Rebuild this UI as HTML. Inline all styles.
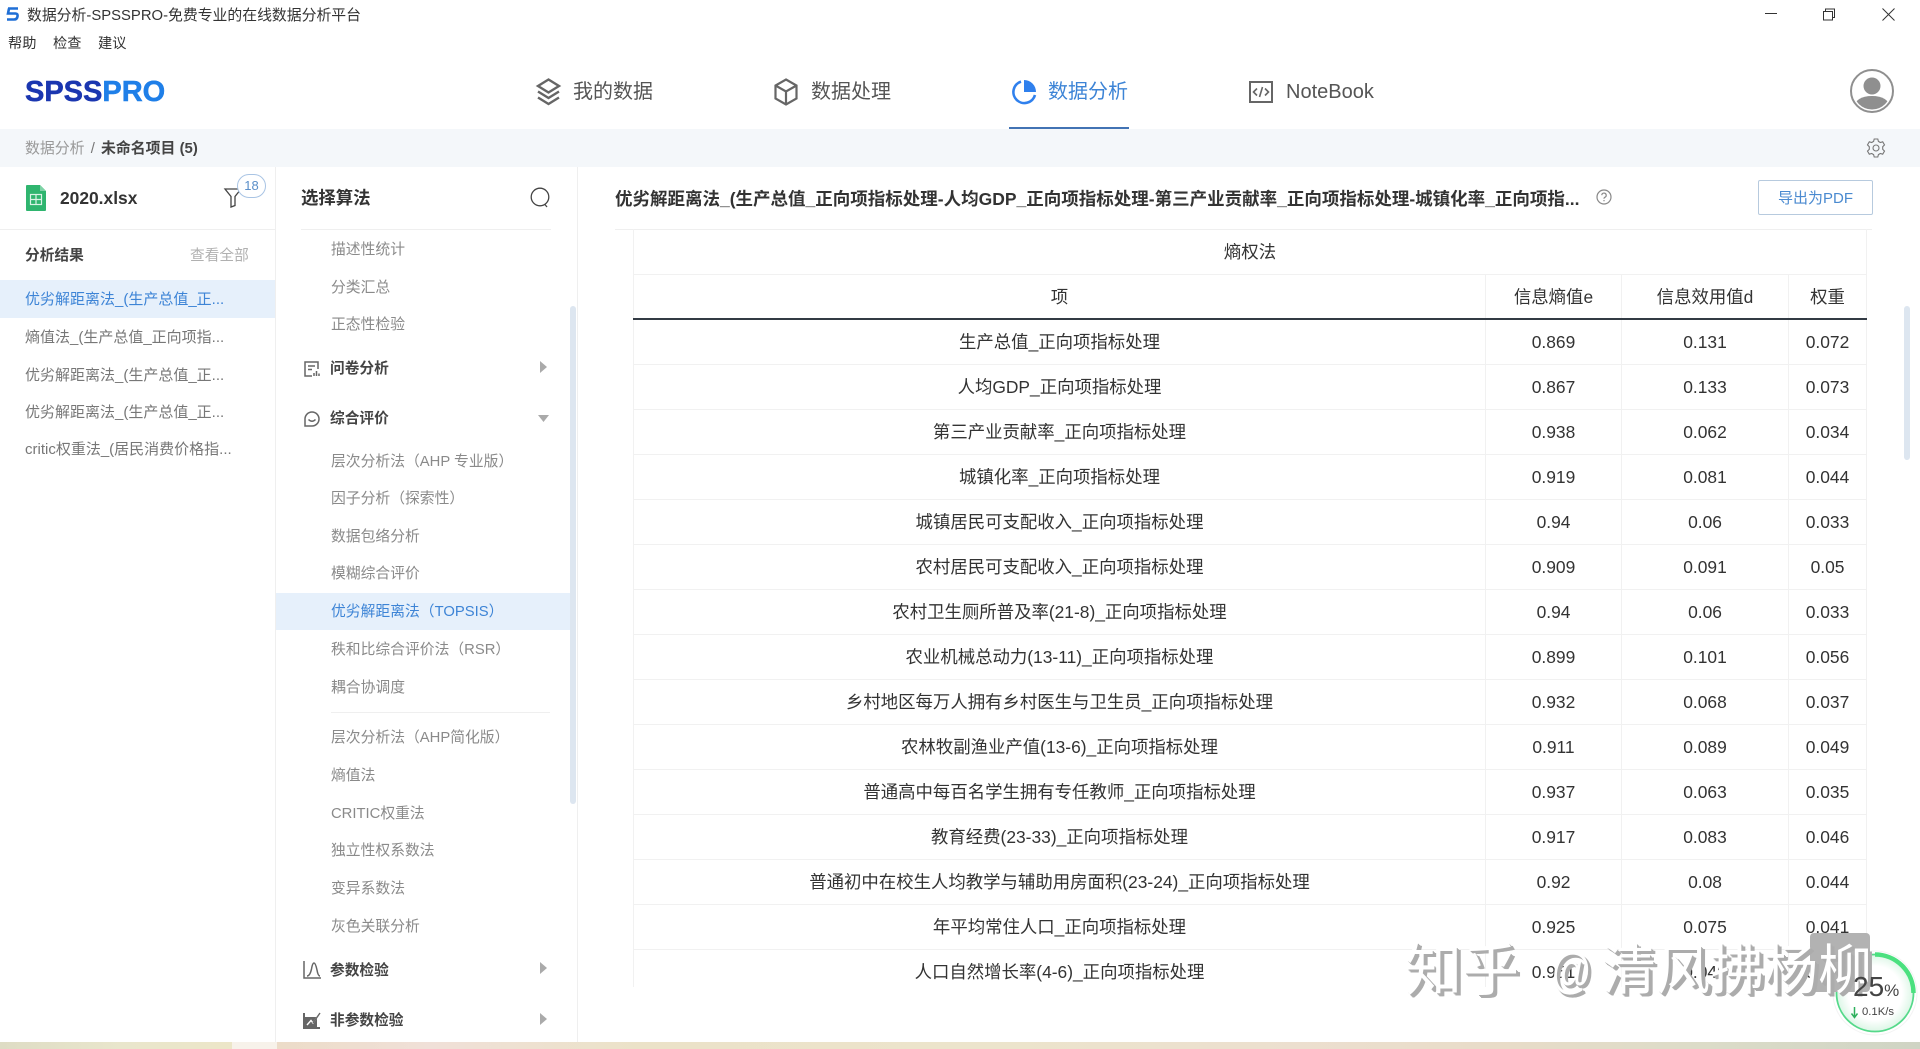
<!DOCTYPE html>
<html lang="zh">
<head>
<meta charset="utf-8">
<title>数据分析-SPSSPRO-免费专业的在线数据分析平台</title>
<style>
html,body{margin:0;padding:0;background:#fff}
body{position:relative;width:1920px;height:1049px;overflow:hidden;font-family:"Liberation Sans","Noto Sans CJK SC",sans-serif;color:#333}
.t{position:absolute;white-space:nowrap;line-height:24px;height:24px;margin-top:1px}
.b{font-weight:700}
.abs{position:absolute}
.m{font-size:14.8px;color:#8a8a8a;left:331px}
.s{font-size:14.7px;color:#444;left:330px;font-weight:700}
.r{font-size:15px;color:#777;left:25px}
.n{font-size:20px;color:#555}
.w{position:absolute;white-space:nowrap;color:#fff;height:64px;line-height:64px;text-shadow:1px 1px 0 #acacac,2px 2px 0 #acacac,3px 3px 0 #acacac,4px 3px 0 #acacac}
svg{position:absolute;overflow:visible}
#tw{position:absolute;left:633px;top:229px;width:1234px;height:758px;overflow:hidden}
table{border-collapse:collapse;table-layout:fixed;width:1233px;font-size:17.4px;color:#333;text-align:center}
td{border:1px solid #f1f1f1;padding:0;height:44px;line-height:24px;white-space:nowrap}
tr.a td{height:44px;border-top:none}
tr.h td{height:43px;border-bottom:2px solid #333b44}
</style>
</head>
<body>
<!-- title bar -->
<svg style="left:6px;top:7px" width="13" height="14" viewBox="0 0 13 14"><path d="M2 1.5H12M3 1.5L2 6.5H9.5Q12 6.5 11.5 9.5Q11 12.5 8 12.5H1" fill="none" stroke="#1f6fd6" stroke-width="2.6"/></svg>
<div class="t" style="left:27px;top:3px;font-size:14.85px;color:#333">数据分析-SPSSPRO-免费专业的在线数据分析平台</div>
<div class="t" style="left:8px;top:31px;font-size:14.2px;color:#333">帮助</div>
<div class="t" style="left:53px;top:31px;font-size:14.2px;color:#333">检查</div>
<div class="t" style="left:98px;top:31px;font-size:14.2px;color:#333">建议</div>
<div class="abs" style="left:1765px;top:13px;width:12px;height:1px;background:#333"></div>
<svg style="left:1822px;top:8px" width="14" height="13" viewBox="0 0 14 13"><path d="M1.5 3.5H10.5V12H1.5ZM3.5 3.5V1H12.5V9.5H10.5" fill="none" stroke="#333"/></svg>
<svg style="left:1882px;top:8px" width="13" height="13" viewBox="0 0 13 13"><path d="M.5.5L12.5 12.5M12.5.5L.5 12.5" fill="none" stroke="#333"/></svg>

<!-- header -->
<div class="t b" style="left:25px;top:74px;height:34px;line-height:34px;font-size:29px;color:#1a36b0;-webkit-text-stroke:.5px">SPSS<span style="color:#1f7fe8">PRO</span></div>

<svg style="left:536px;top:78px" width="25" height="28" viewBox="0 0 25 28" fill="none" stroke="#666" stroke-width="2.4"><path d="M12.5 1.5L23 8L12.5 14.5L2 8Z"/><path d="M2 13.5L12.5 20L23 13.5"/><path d="M2 19.5L12.5 26L23 19.5"/></svg>
<div class="t n" style="left:573px;top:79px">我的数据</div>
<svg style="left:774px;top:78px" width="24" height="28" viewBox="0 0 24 28" fill="none" stroke="#666" stroke-width="2.2"><path d="M12 1.5L22.5 7.5V20.5L12 26.5L1.5 20.5V7.5Z"/><path d="M1.5 7.5L12 13.5L22.5 7.5M12 13.5V26.5"/></svg>
<div class="t n" style="left:811px;top:79px">数据处理</div>
<svg style="left:1011px;top:79px" width="26" height="26" viewBox="0 0 26 26" fill="none"><path d="M10 2.6A11 11 0 1 0 24 16" stroke="#2f80ed" stroke-width="2.6"/><path d="M13 1A12 12 0 0 1 25 13H13Z" fill="#2f80ed"/></svg>
<div class="t n" style="left:1048px;top:79px;color:#3d84d6">数据分析</div>
<div class="abs" style="left:1009px;top:127px;width:120px;height:2px;background:#4273b4"></div>
<svg style="left:1249px;top:81px" width="24" height="22" viewBox="0 0 24 22" fill="none" stroke="#666"><rect x="1" y="1" width="22" height="20" stroke-width="2"/><path d="M8 7.5L4.5 11L8 14.5M16 7.5L19.5 11L16 14.5M13.5 6L10.5 16" stroke-width="1.6"/></svg>
<div class="t n" style="left:1286px;top:79px">NoteBook</div>

<svg style="left:1850px;top:69px" width="44" height="44" viewBox="0 0 44 44"><defs><clipPath id="cl"><circle cx="22" cy="22" r="18.5"/></clipPath></defs><circle cx="22" cy="22" r="21" fill="#fff" stroke="#8f8f8f" stroke-width="2"/><g clip-path="url(#cl)" fill="#8f8f8f"><circle cx="22" cy="17" r="8.5"/><path d="M3 42Q4 27 22 27Q40 27 41 42Z"/></g></svg>

<!-- breadcrumb -->
<div class="abs" style="left:0;top:129px;width:1920px;height:38px;background:#f4f7fa"></div>
<div class="t" style="left:25px;top:136px;font-size:14.9px;color:#999">数据分析 <span style="color:#777;margin:0 2px">/</span> <span style="color:#444;font-weight:700">未命名项目 (5)</span></div>
<svg style="left:1866px;top:138px" width="20" height="20" viewBox="0 0 20 20" fill="none" stroke="#777" stroke-width="1.1"><path d="M8.2 1H11.8L12.4 3.4L14.3 4.5L16.7 3.8L18.5 6.9L16.7 8.7V11.3L18.5 13.1L16.7 16.2L14.3 15.5L12.4 16.6L11.8 19H8.2L7.6 16.6L5.7 15.5L3.3 16.2L1.5 13.1L3.3 11.3V8.7L1.5 6.9L3.3 3.8L5.7 4.5L7.6 3.4Z"/><circle cx="10" cy="10" r="3"/></svg>

<!-- panel borders -->
<div class="abs" style="left:275px;top:167px;width:1px;height:875px;background:#efefef"></div>
<div class="abs" style="left:577px;top:167px;width:1px;height:875px;background:#efefef"></div>

<!-- left panel -->
<svg style="left:26px;top:185px" width="20" height="26" viewBox="0 0 20 26"><path d="M1 0H14L20 6V25Q20 26 19 26H1Q0 26 0 25V1Q0 0 1 0Z" fill="#2fb56f"/><path d="M14 0L20 6H14Z" fill="#7ed3a6"/><rect x="4.5" y="9.5" width="11" height="10" fill="none" stroke="#d9f3e5" stroke-width="1.2"/><path d="M10 9.5V19.5M4.5 14.5H15.5" stroke="#d9f3e5" stroke-width="1.2"/></svg>
<div class="t b" style="left:60px;top:185px;font-size:17.4px;color:#333">2020.xlsx</div>
<svg style="left:224px;top:188px" width="18" height="20" viewBox="0 0 18 20" fill="none" stroke="#444" stroke-width="1.3"><path d="M1 1H17L11 8.5V17.5L7 19V8.5Z"/></svg>
<div class="abs" style="left:237px;top:174px;width:27px;height:22px;border:1px solid #a9c4e4;border-radius:12px;background:#fff;color:#5b8fc9;font-size:13px;line-height:22px;text-align:center">18</div>
<div class="abs" style="left:0;top:229px;width:275px;height:1px;background:#efefef"></div>
<div class="t b" style="left:25px;top:243px;font-size:14.7px;color:#444">分析结果</div>
<div class="t" style="left:190px;top:243px;font-size:14.7px;color:#b0b0b0">查看全部</div>
<div class="abs" style="left:0;top:280px;width:275px;height:38px;background:#e6f0fb"></div>
<div class="t r" style="top:287px;color:#3d84d6">优劣解距离法_(生产总值_正...</div>
<div class="t r" style="top:325px">熵值法_(生产总值_正向项指...</div>
<div class="t r" style="top:363px">优劣解距离法_(生产总值_正...</div>
<div class="t r" style="top:400px">优劣解距离法_(生产总值_正...</div>
<div class="t r" style="top:437px">critic权重法_(居民消费价格指...</div>

<!-- middle panel -->
<div class="t b" style="left:301px;top:185px;font-size:17.4px;color:#333">选择算法</div>
<svg style="left:530px;top:187px" width="20" height="21" viewBox="0 0 20 21" fill="none" stroke="#444" stroke-width="1.3"><circle cx="10" cy="10" r="8.8"/><path d="M14.5 17L17 20"/></svg>
<div class="abs" style="left:301px;top:229px;width:250px;height:1px;background:#efefef"></div>
<div class="t m" style="top:237px">描述性统计</div>
<div class="t m" style="top:275px">分类汇总</div>
<div class="t m" style="top:312px">正态性检验</div>
<svg style="left:304px;top:361px" width="16" height="16" viewBox="0 0 16 16" fill="none" stroke="#666" stroke-width="1.5"><path d="M8 15H1V1H14V8"/><path d="M4 5H11M4 8.5H8M10 15V12M12.5 15V10M15 15V12.5"/></svg>
<div class="t s" style="top:356px">问卷分析</div>
<svg style="left:540px;top:361px" width="7" height="12" viewBox="0 0 7 12"><path d="M0 0L7 6L0 12Z" fill="#aaa"/></svg>
<svg style="left:303px;top:410px" width="18" height="18" viewBox="0 0 18 18" fill="none" stroke="#666" stroke-width="1.5"><path d="M2 16V9A7 7 0 1 1 9 16Z"/><path d="M5.5 9.5Q9 13 12.5 9.5"/></svg>
<div class="t s" style="top:406px">综合评价</div>
<svg style="left:538px;top:415px" width="11" height="7" viewBox="0 0 11 7"><path d="M0 0H11L5.5 7Z" fill="#aaa"/></svg>
<div class="t m" style="top:449px">层次分析法（AHP 专业版）</div>
<div class="t m" style="top:486px">因子分析（探索性）</div>
<div class="t m" style="top:524px">数据包络分析</div>
<div class="t m" style="top:561px">模糊综合评价</div>
<div class="abs" style="left:276px;top:593px;width:294px;height:37px;background:#e6f0fb"></div>
<div class="t m" style="top:599px;color:#3d84d6">优劣解距离法（TOPSIS）</div>
<div class="t m" style="top:637px">秩和比综合评价法（RSR）</div>
<div class="t m" style="top:675px">耦合协调度</div>
<div class="abs" style="left:331px;top:712px;width:219px;height:1px;background:#efefef"></div>
<div class="t m" style="top:725px">层次分析法（AHP简化版）</div>
<div class="t m" style="top:763px">熵值法</div>
<div class="t m" style="top:801px">CRITIC权重法</div>
<div class="t m" style="top:838px">独立性权系数法</div>
<div class="t m" style="top:876px">变异系数法</div>
<div class="t m" style="top:914px">灰色关联分析</div>
<svg style="left:303px;top:961px" width="18" height="18" viewBox="0 0 18 18" fill="none" stroke="#666" stroke-width="1.5"><path d="M1 0V17H18"/><path d="M4 15Q7 15 8.5 8Q9.5 2 11 2Q12.5 2 14 9Q15 15 17 15"/></svg>
<div class="t s" style="top:958px">参数检验</div>
<svg style="left:540px;top:962px" width="7" height="12" viewBox="0 0 7 12"><path d="M0 0L7 6L0 12Z" fill="#aaa"/></svg>
<svg style="left:303px;top:1012px" width="18" height="17" viewBox="0 0 18 17"><path d="M1 1V16H17" fill="none" stroke="#666" stroke-width="2"/><rect x="1" y="5" width="13" height="11" fill="#666"/><path d="M4 13L8 8.5L10 11L17 1" fill="none" stroke="#fff" stroke-width="1.4"/><path d="M10 11L17 1" fill="none" stroke="#666" stroke-width="1.4"/></svg>
<div class="t s" style="top:1008px">非参数检验</div>
<svg style="left:540px;top:1013px" width="7" height="12" viewBox="0 0 7 12"><path d="M0 0L7 6L0 12Z" fill="#aaa"/></svg>
<div class="abs" style="left:570px;top:306px;width:6px;height:498px;background:#dde6f0;border-radius:3px"></div>

<!-- main -->
<div class="t b" style="left:615px;top:186px;font-size:17.5px;color:#333;letter-spacing:0">优劣解距离法_(生产总值_正向项指标处理-人均GDP_正向项指标处理-第三产业贡献率_正向项指标处理-城镇化率_正向项指...</div>
<svg style="left:1596px;top:189px" width="16" height="16" viewBox="0 0 16 16" fill="none" stroke="#888" stroke-width="1.2"><circle cx="8" cy="8" r="7"/><path d="M5.8 6.2A2.2 2.2 0 1 1 8.6 8.4Q8 8.7 8 9.8M8 11V12.2"/></svg>
<div class="abs" style="left:1758px;top:180px;width:113px;height:33px;border:1px solid #b7cade;border-radius:2px;text-align:center;line-height:35px;font-size:15px;color:#4a8ad0">导出为PDF</div>
<div class="abs" style="left:615px;top:229px;width:1257px;height:1px;background:#efefef"></div>

<div id="tw">
<table>
<colgroup><col style="width:852px"><col style="width:136px"><col style="width:167px"><col style="width:78px"></colgroup>
<tr><td colspan="4" style="height:45px;border-top:none">熵权法</td></tr>
<tr class="h"><td>项</td><td>信息熵值e</td><td>信息效用值d</td><td>权重</td></tr>
<tr class="a"><td>生产总值_正向项指标处理</td><td>0.869</td><td>0.131</td><td>0.072</td></tr>
<tr class="a"><td>人均GDP_正向项指标处理</td><td>0.867</td><td>0.133</td><td>0.073</td></tr>
<tr class="a"><td>第三产业贡献率_正向项指标处理</td><td>0.938</td><td>0.062</td><td>0.034</td></tr>
<tr class="a"><td>城镇化率_正向项指标处理</td><td>0.919</td><td>0.081</td><td>0.044</td></tr>
<tr class="a"><td>城镇居民可支配收入_正向项指标处理</td><td>0.94</td><td>0.06</td><td>0.033</td></tr>
<tr class="a"><td>农村居民可支配收入_正向项指标处理</td><td>0.909</td><td>0.091</td><td>0.05</td></tr>
<tr class="a"><td>农村卫生厕所普及率(21-8)_正向项指标处理</td><td>0.94</td><td>0.06</td><td>0.033</td></tr>
<tr class="a"><td>农业机械总动力(13-11)_正向项指标处理</td><td>0.899</td><td>0.101</td><td>0.056</td></tr>
<tr class="a"><td>乡村地区每万人拥有乡村医生与卫生员_正向项指标处理</td><td>0.932</td><td>0.068</td><td>0.037</td></tr>
<tr class="a"><td>农林牧副渔业产值(13-6)_正向项指标处理</td><td>0.911</td><td>0.089</td><td>0.049</td></tr>
<tr class="a"><td>普通高中每百名学生拥有专任教师_正向项指标处理</td><td>0.937</td><td>0.063</td><td>0.035</td></tr>
<tr class="a"><td>教育经费(23-33)_正向项指标处理</td><td>0.917</td><td>0.083</td><td>0.046</td></tr>
<tr class="a"><td>普通初中在校生人均教学与辅助用房面积(23-24)_正向项指标处理</td><td>0.92</td><td>0.08</td><td>0.044</td></tr>
<tr class="a"><td>年平均常住人口_正向项指标处理</td><td>0.925</td><td>0.075</td><td>0.041</td></tr>
<tr class="a"><td>人口自然增长率(4-6)_正向项指标处理</td><td>0.951</td><td>0.049</td><td>0.027</td></tr>
</table>
</div>
<div class="abs" style="left:1904px;top:306px;width:6px;height:154px;background:#dde6f0;border-radius:3px"></div>

<!-- bottom strip -->
<div class="abs" style="left:0;top:1042px;width:1920px;height:7px;background:linear-gradient(90deg,#dedcc4 0,#e9e6cc 120px,#ece6c8 232px,#f7f2ea 232px,#f7f2ea 277px,#ecdcc8 277px,#f0e0d8 430px,#ebe2c8 640px,#ece4cc 1000px,#ecdfcf 1300px,#e8dcc8 1500px,#dcdcc8 1700px,#cfd4c4 1920px)"></div>

<!-- speed widget -->
<svg style="left:1825px;top:943px" width="100" height="100" viewBox="0 0 100 100"><defs><radialGradient id="g" cx=".5" cy=".5" r=".5"><stop offset=".7" stop-color="#fff"/><stop offset="1" stop-color="#dcf6e6"/></radialGradient></defs><circle cx="50" cy="50" r="42" fill="#fff" stroke="#f3f3f3"/><circle cx="50" cy="50" r="38.5" fill="url(#g)" stroke="#55d98a" stroke-width="1.8"/><path d="M50 11.5A38.5 38.5 0 0 1 88.5 50" fill="none" stroke="#4be07f" stroke-width="4.5"/></svg>

<!-- watermark: white glyphs with offset grey shadow -->
<div class="abs" style="left:1810px;top:933px;width:60px;height:59px;background:#b2b2b2;border-radius:4px"></div>
<div class="w" style="left:1405px;top:939px;font-size:57px">知乎</div>
<div class="w" style="left:1551px;top:939px;font-size:50px;transform:scaleX(.8);transform-origin:left center">@</div>
<div class="w" style="left:1602px;top:939px;font-size:54px">清风拂杨柳</div>

<div class="t" style="left:1853px;top:970px;height:34px;line-height:34px;font-size:28px;color:#444;margin:0">25<span style="font-size:17px">%</span></div>
<svg style="left:1851px;top:1007px" width="7" height="11" viewBox="0 0 7 11"><path d="M3.5 0V10M.5 6.5L3.5 10.5L6.5 6.5" fill="none" stroke="#2db05c" stroke-width="1.5"/></svg>
<div class="t" style="left:1862px;top:1002px;height:20px;line-height:20px;font-size:11.3px;color:#444;margin:0">0.1K/s</div>
</body>
</html>
